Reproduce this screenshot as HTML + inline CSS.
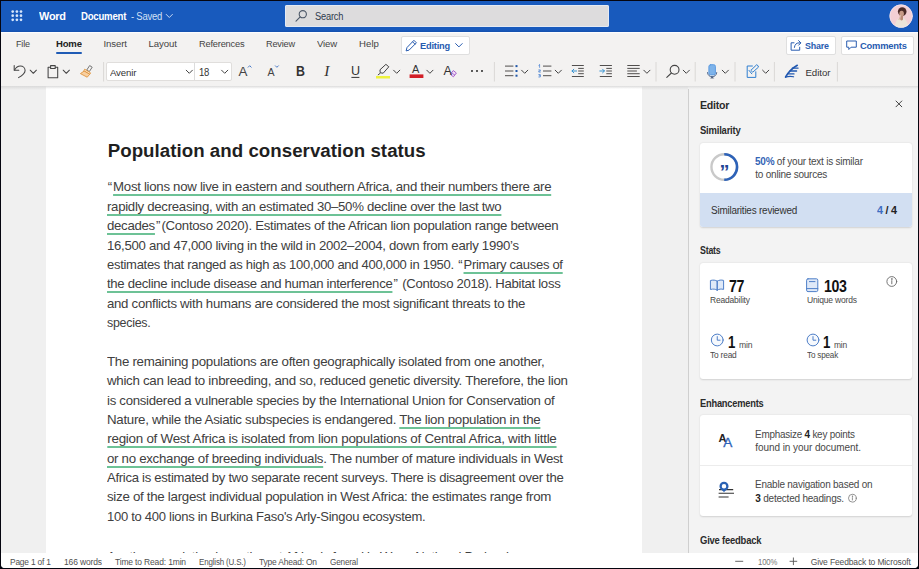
<!DOCTYPE html>
<html lang="en"><head><meta charset="utf-8"><title>Word - Document</title>
<style>
html,body{margin:0;padding:0;background:#fff;}
body{width:919px;height:569px;overflow:hidden;position:relative;font-family:"Liberation Sans", sans-serif;}
.t{position:absolute;white-space:nowrap;margin:0;padding:0;z-index:2;}
.a{position:absolute;}
svg{position:absolute;overflow:visible;z-index:2;}
.u{text-decoration:underline;text-decoration-color:#6dc296;text-decoration-thickness:1.8px;text-underline-offset:2.5px;text-decoration-skip-ink:none;}
b{font-weight:700;}
.q{margin:0 1.2px;}
</style></head>
<body>
<div class="a" style="left:0;top:0;width:919px;height:569px;background:#05050f;"></div>
<div class="a" id="app" style="left:1px;top:1px;width:916.8px;height:566.5px;background:#f0f0f0;border-radius:0 0 4px 4px;overflow:hidden;">
  <div class="a" style="left:0;top:0;width:917px;height:31.1px;background:linear-gradient(#185abd 0,#185abd 29.3px,#1552b0 29.8px,#1552b0 100%);"></div>
  <div class="a" style="left:0;top:31.1px;width:917px;height:53.5px;background:#f3f2f1;box-shadow:inset 0 1.2px 0 #fbfcfe;"></div>
  <div class="a" style="left:0;top:84.6px;width:917px;height:4px;background:linear-gradient(#dadada,#f0f0f0);"></div>
  <div class="a" style="left:45px;top:84.6px;width:595.7px;height:470px;background:#fff;"></div>
  <div class="a" style="left:45px;top:84.6px;width:595.7px;height:3.5px;background:linear-gradient(#dcdcdc,#fff);"></div>
  <div class="a" style="left:687.4px;top:84.6px;width:231px;height:470px;background:#f3f3f3;border-left:1px solid #cfcfcf;"></div>
  <div class="a" style="left:687.4px;top:84.6px;width:231px;height:3.5px;background:linear-gradient(#dcdcdc,#f3f3f3);"></div>
  <div class="a" style="left:0;top:551.6px;width:917px;height:16px;background:#fff;z-index:1;"></div>
</div>
<!-- search -->
<div class="a" style="left:285px;top:5.2px;width:324px;height:21.8px;background:#dddcdd;border-radius:2px;box-shadow:inset 0 0 0 0.8px #e6eefb;"></div>
<!-- buttons -->
<div class="a" style="left:400.6px;top:35.6px;width:67px;height:17.8px;background:#fff;border:1px solid #dfdfdf;border-radius:2px;box-sizing:content-box;"></div>
<div class="a" style="left:785.6px;top:35.6px;width:48.4px;height:17.8px;background:#fff;border:1px solid #dfdfdf;border-radius:2px;"></div>
<div class="a" style="left:841px;top:35.6px;width:71px;height:17.8px;background:#fff;border:1px solid #dfdfdf;border-radius:2px;"></div>
<!-- home underline -->
<div class="a" style="left:56px;top:52.3px;width:26.4px;height:1.8px;background:#1f5bb5;border-radius:1px;"></div>
<!-- font box -->
<div class="a" style="left:106px;top:62.4px;width:123.6px;height:17px;background:#fff;border:1px solid #e0dedc;border-radius:2px;"></div>
<div class="a" style="left:194.4px;top:63px;width:1px;height:17px;background:#dcdcdc;"></div>
<!-- cards -->
<div class="a" style="left:699.5px;top:142.5px;width:212px;height:84.5px;background:#fff;border-radius:3px;box-shadow:0 0.5px 1.8px rgba(0,0,0,.14);overflow:hidden;">
  <div class="a" style="left:0;top:50.5px;width:212px;height:34px;background:#d2dff2;"></div>
</div>
<div class="a" style="left:699.5px;top:262.5px;width:212px;height:116.2px;background:#fff;border-radius:3px;box-shadow:0 0.5px 1.8px rgba(0,0,0,.14);"></div>
<div class="a" style="left:699.5px;top:415px;width:212px;height:100.7px;background:#fff;border-radius:3px;box-shadow:0 0.5px 1.8px rgba(0,0,0,.14);">
  <div class="a" style="left:0;top:50px;width:212px;height:1px;background:#ececec;"></div>
</div>
<svg width="919" height="569" viewBox="0 0 919 569" style="left:0;top:0;" fill="none" stroke-linecap="round" stroke-linejoin="round">
<!-- waffle -->
<g fill="#d7e6fb" stroke="none">
<circle cx="12.7" cy="11.6" r="1.35"/><circle cx="16.9" cy="11.6" r="1.35"/><circle cx="21" cy="11.6" r="1.35"/>
<circle cx="12.7" cy="15.7" r="1.35"/><circle cx="16.9" cy="15.7" r="1.35"/><circle cx="21" cy="15.7" r="1.35"/>
<circle cx="12.7" cy="19.8" r="1.35"/><circle cx="16.9" cy="19.8" r="1.35"/><circle cx="21" cy="19.8" r="1.35"/>
</g>
<path d="M166.2 14.4l3.1 3.1 3.1-3.1" stroke="#c9d9f2" stroke-width="1"/>
<!-- header search icon -->
<g stroke="#4d5868" stroke-width="1.1"><circle cx="302.8" cy="14.2" r="3.6"/><path d="M300.2 16.9l-4.2 4.2"/></g>
<!-- avatar -->
<g stroke="none">
<circle cx="901.1" cy="16.1" r="11.5" fill="#f3cfd4"/>
<clipPath id="av"><circle cx="901.1" cy="16.1" r="11.4"/></clipPath>
<g clip-path="url(#av)">
<path d="M894.8 28c0.200-5.600 2.400-10.400 6.400-10.400s6.800 4.800 7.400 10.400z" fill="#ece4d8"/>
<ellipse cx="902.2" cy="11.600" rx="4.300" ry="4.400" fill="#4a2a26"/>
<ellipse cx="901.6" cy="13.800" rx="2.300" ry="3.100" fill="#c79a86"/>
<path d="M900.200 15.800h2.800v3.800c-1 1.200-2 1.200-2.800 0z" fill="#b98a76"/>
<path d="M899 19.500c0.800-1.600 1.400-3 1.600-4" stroke="#d9b7a6" stroke-width="1.200" fill="none"/>
</g>
<circle cx="901.1" cy="16.1" r="11.300" fill="none" stroke="#eee6f4" stroke-width="0.700"/>
</g>
<!-- editing pencil -->
<g stroke="#285cb0" stroke-width="1">
<path d="M414.2 40.6l2.2 2.2-7.3 7.3-3 0.8 0.8-3z"/><path d="M412.8 42l2.2 2.2"/>
<path d="M455.6 43.6l3.3 3.3 3.3-3.3"/>
</g>
<!-- share icon -->
<g stroke="#285cb0" stroke-width="1">
<path d="M794 42.8h-2.9v7.4h8.6v-3"/><path d="M794.4 47.4c0.3-2.9 2-4.5 4.6-4.5h1.6"/><path d="M798.6 40.6l2.3 2.3-2.3 2.3"/>
</g>
<!-- comment icon -->
<path d="M847.1 41h9.2v6.2h-5.2l-2.3 2.3v-2.3h-1.7z" stroke="#285cb0" stroke-width="1"/>
<!-- toolbar: undo -->
<g stroke="#444" stroke-width="1.05">
<path d="M14.2 65.6v4.6h4.6"/><path d="M14.6 70c1.4-2.6 3.4-4 5.7-4 2.8 0 4.8 2 4.8 4.6 0 2.6-2 4.600-6.600 7"/>
<path d="M30.200 70.200l3.100 3.100 3.100-3.100"/>
<!-- clipboard -->
<path d="M50.400 67.200h-2.300v10.600h9.600v-10.600h-2.300"/><path d="M50.600 65.600h4.600v2.800h-4.600z"/>
<path d="M63.200 70.200l3.100 3.100 3.100-3.100"/>
</g>
<!-- format painter -->
<g stroke-width="0.9">
<path d="M90 65.800l2.200 1.400-2.900 4.400-2.200-1.400z" stroke="#666" fill="#f3f2f1"/>
<path d="M85 69.400l5.600 3.500-0.900 1.500-5.600-3.500z" stroke="#e0953f" fill="#fbe3c4"/>
<path d="M83.800 71.300l-3.400 2.300 6.800 3.600 2.300-2.700z" stroke="#e0953f" fill="#f8cf9f"/>
</g>
<!-- separators -->
<g stroke="#dad8d6" stroke-width="1" stroke-linecap="butt">
<path d="M103.600 62v19.500M494.400 62v19.500M656 62v19.500M695.200 62v19.500M735 62v19.500M774.400 62v19.500M837.400 62v19.500"/>
</g>
<!-- font box chevrons -->
<g stroke="#444" stroke-width="1">
<path d="M186.200 70.200l3.100 3.100 3.100-3.100"/><path d="M221.600 70.200l3.100 3.100 3.100-3.100"/>
<path d="M393.600 70.200l3.100 3.100 3.100-3.100"/><path d="M426.800 70.200l3.100 3.100 3.100-3.100"/>
<path d="M521.600 70.200l3.100 3.100 3.100-3.100"/><path d="M555.200 70.200l3.100 3.100 3.100-3.100"/>
<path d="M643.800 70.200l3.100 3.100 3.100-3.100"/><path d="M683.200 70.200l3.100 3.100 3.100-3.100"/>
<path d="M722.200 70.200l3.100 3.100 3.100-3.100"/><path d="M762.600 70.200l3.100 3.100 3.100-3.100"/>
</g>
<!-- grow/shrink carets -->
<path d="M248.200 67.200l1.500-1.500 1.500 1.500" stroke="#3a6fc4" stroke-width="0.9"/>
<path d="M275.400 65.800l1.500 1.500 1.500-1.500" stroke="#3a6fc4" stroke-width="0.9"/>
<!-- U underline -->
<path d="M351.400 77.400h8" stroke="#333" stroke-width="1" stroke-linecap="butt"/>
<!-- highlighter -->
<g stroke="#444" stroke-width="1">
<path d="M386.200 64.600l2.600 2.200-5.600 6.400-3-0.400-0.200-2.600z"/><path d="M380 73.400l-1.800 1.400"/>
</g>
<rect x="376" y="76" width="14" height="2.500" fill="#eef23c" stroke="none"/>
<rect x="409.600" y="74.400" width="13.800" height="3.600" fill="#d21f27" stroke="none"/>
<!-- eraser on clear format -->
<path d="M453.600 70.800l2.800 2.200-3 3.800-2.800-2.200z" stroke="#a055c8" stroke-width="0.9" fill="#f0e0f6"/><path d="M451.900 72.900l2.800 2.200" stroke="#a055c8" stroke-width="0.8"/>
<!-- dots -->
<g fill="#333" stroke="none"><circle cx="472" cy="71" r="1.050"/><circle cx="477" cy="71" r="1.050"/><circle cx="482" cy="71" r="1.050"/></g>
<!-- bullets -->
<g stroke="#484644" stroke-width="0.95" stroke-linecap="butt"><path d="M505 66.100h8.400M505 71h8.400M505 75.700h8.400"/></g>
<g fill="#1f56a8" stroke="none"><rect x="515.500" y="65.100" width="2" height="2"/><rect x="515.500" y="70" width="2" height="2"/><rect x="515.500" y="74.700" width="2" height="2"/></g>
<!-- numbering -->
<g stroke="#484644" stroke-width="0.95" stroke-linecap="butt"><path d="M543 66.100h8.400M543 71h8.400M543 75.700h8.400"/></g>
<g stroke="#3a78d0" stroke-width="0.700"><path d="M539.600 64.800v2.600M538.800 65.400l0.800-0.600M538.800 69.900h1.500v1.100h-1.500v1.100h1.600M538.800 74.500h1.500v2.500h-1.500M539.200 75.700h1"/></g>
<!-- outdent -->
<g stroke="#484644" stroke-width="0.95" stroke-linecap="butt"><path d="M571.900 65.500h11.900M578.200 68.400h5.600M578.200 71h5.600M578.200 73.700h5.600M571.900 76.500h11.900"/></g>
<g stroke="#2f8fd0" stroke-width="0.95"><path d="M576.600 71h-4.600M573.800 69.200l-1.800 1.800 1.800 1.800"/></g>
<!-- indent -->
<g stroke="#484644" stroke-width="0.95" stroke-linecap="butt"><path d="M599.800 65.500h12.100M606.300 68.400h5.600M606.300 71h5.600M606.300 73.700h5.600M599.800 76.500h12.100"/></g>
<g stroke="#2f8fd0" stroke-width="0.95"><path d="M599.800 71h4.600M602.600 69.200l1.800 1.800-1.800 1.800"/></g>
<!-- align -->
<g stroke="#484644" stroke-width="0.95" stroke-linecap="butt"><path d="M627.300 65.500h12.400M627.300 68.400h12.400M627.300 71h9.600M627.300 73.700h12.400M627.300 76.500h12.400"/></g>
<!-- find -->
<g stroke="#444" stroke-width="1.1"><circle cx="674.600" cy="69.800" r="4.400"/><path d="M671.400 73l-4.600 4.400"/></g>
<!-- mic -->
<g stroke-width="1"><path d="M707.500 72.600c0.400 2.900 2.200 4.100 4.600 4.100s4.200-1.200 4.600-4.100" stroke="#4a6288"/><path d="M710.900 78l1.200-1.300 1.200 1.300z" fill="#3a4f70" stroke="#3a4f70" stroke-width="0.500"/><rect x="708.900" y="64.700" width="6.500" height="10.200" rx="1.700" fill="#7db3ea" stroke="#5d9be0"/></g>
<!-- designer -->
<g stroke="#2f7fd0" stroke-width="1"><path d="M752.400 66h-5.200v11.400h8.600v-5.600"/><path d="M757.600 65.400l1 1.600-5.800 5.200-2-1.800 5.600-5.400z"/><path d="M749 70.400l2.800 3.400"/></g>
<!-- editor icon -->
<g stroke="#2158b0" stroke-linecap="round"><path d="M797.300 65.300c-4.600 2.600-8.800 6.600-11.700 11.700" stroke-width="1.600"/><path d="M792.300 68.100h5.800M790.200 71h6.400M788.200 73.900h5.800" stroke-width="1.300"/><path d="M785.400 77.300c2.400-0.900 5.200-1.100 8.200-0.500" stroke-width="1.150"/></g>
<!-- panel close -->
<path d="M896 101l5.800 5.800M901.800 101l-5.800 5.800" stroke="#444" stroke-width="1"/>
<!-- progress ring -->
<circle cx="724.250" cy="167" r="12.800" stroke="#c9c9c9" stroke-width="2.400"/>
<path d="M724.250 154.200a12.800 12.800 0 0 1 0 25.600" stroke="#2d62b8" stroke-width="2.600" stroke-linecap="butt"/>
<!-- book icon -->
<g stroke="#4f7fc8" stroke-width="1"><path d="M717.200 281.200v9M710.800 280.400c2.400-0.600 4.600-0.400 6.400 0.800 1.800-1.200 4-1.400 6.400-0.800v9c-2.400-0.600-4.600-0.400-6.400 0.800-1.800-1.200-4-1.400-6.400-0.800z" fill="#dfe9f8"/><path d="M717.200 281.200v9"/></g>
<g stroke="#4f7fc8" stroke-width="1"><rect x="806.600" y="278.800" width="11.200" height="12.800" rx="1.400" fill="#dfe9f8"/><path d="M809.400 281.600h5.600M806.800 288.600h11"/></g>
<!-- info icons -->
<g stroke="#666" stroke-width="0.9"><circle cx="891.800" cy="281.500" r="4.900"/><path d="M891.800 280.600v3.200"/><circle cx="891.800" cy="279" r="0.300"/></g>
<g stroke="#777" stroke-width="0.800"><circle cx="852.400" cy="498.200" r="3.900"/><path d="M852.400 497.600v2.400"/><circle cx="852.400" cy="496.200" r="0.200"/></g>
<!-- clocks -->
<g stroke="#4f7fc8" stroke-width="1"><circle cx="717.250" cy="340" r="5.900" fill="#f6f9fd"/><path d="M717.250 336.600v3.600h2.800"/></g>
<g stroke="#4f7fc8" stroke-width="1"><circle cx="813" cy="340" r="5.900" fill="#f6f9fd"/><path d="M813 336.600v3.600h2.800"/></g>
<!-- nav icon -->
<g stroke="#333" stroke-width="1.100" stroke-linecap="butt"><path d="M719 489.600h14.200M718.600 493.300h15.400M718.600 497h10"/></g>
<path d="M721 488.800l3 3.400 3-3.400z" fill="#2b62b4" stroke="none"/>
<circle cx="724" cy="486.300" r="3.400" fill="#fff" stroke="#2b62b4" stroke-width="2.300"/>
<!-- status bar zoom -->
<g stroke="#555" stroke-width="0.9" stroke-linecap="butt"><path d="M735.200 561.300h8M789.600 561.300h7.600M793.400 557.500v7.600"/></g>
</svg>

<div class="t" id="t0" style="left:39.40px;top:11px;font-size:11.40px;line-height:11px;font-weight:700;color:#ffffff;letter-spacing:-0.251px;transform:scaleX(0.9594);transform-origin:0 0;">Word</div>
<div class="t" id="t1" style="left:80.60px;top:12px;font-size:10.00px;line-height:10px;font-weight:700;color:#ffffff;letter-spacing:-0.220px;transform:scaleX(0.9586);transform-origin:0 0;">Document</div>
<div class="t" id="t2" style="left:131.00px;top:12px;font-size:10.00px;line-height:10px;font-weight:400;color:#d3e0f5;letter-spacing:-0.220px;transform:scaleX(0.9470);transform-origin:0 0;">- Saved</div>
<div class="t" id="t3" style="left:315.00px;top:12px;font-size:10.00px;line-height:10px;font-weight:400;color:#2f3b4d;letter-spacing:-0.220px;transform:scaleX(0.9283);transform-origin:0 0;">Search</div>
<div class="t" id="t4" style="left:16.00px;top:39px;font-size:9.60px;line-height:10px;font-weight:400;color:#444;letter-spacing:-0.211px;transform:scaleX(0.9436);transform-origin:0 0;">File</div>
<div class="t" id="t5" style="left:56.00px;top:39px;font-size:9.60px;line-height:10px;font-weight:700;color:#222;letter-spacing:-0.188px;transform:scaleX(0.9964);transform-origin:0 0;">Home</div>
<div class="t" id="t6" style="left:103.40px;top:39px;font-size:9.60px;line-height:10px;font-weight:400;color:#444;letter-spacing:-0.073px;">Insert</div>
<div class="t" id="t7" style="left:148.40px;top:39px;font-size:9.60px;line-height:10px;font-weight:400;color:#444;letter-spacing:-0.039px;">Layout</div>
<div class="t" id="t8" style="left:199.00px;top:39px;font-size:9.60px;line-height:10px;font-weight:400;color:#444;letter-spacing:-0.211px;transform:scaleX(0.9668);transform-origin:0 0;">References</div>
<div class="t" id="t9" style="left:266.40px;top:39px;font-size:9.60px;line-height:10px;font-weight:400;color:#444;letter-spacing:-0.211px;transform:scaleX(0.9601);transform-origin:0 0;">Review</div>
<div class="t" id="t10" style="left:317.40px;top:39px;font-size:9.60px;line-height:10px;font-weight:400;color:#444;letter-spacing:-0.121px;transform:scaleX(0.9969);transform-origin:0 0;">View</div>
<div class="t" id="t11" style="left:359.00px;top:39px;font-size:9.60px;line-height:10px;font-weight:400;color:#444;letter-spacing:0.076px;">Help</div>
<div class="t" id="t12" style="left:420.40px;top:41px;font-size:9.80px;line-height:10px;font-weight:700;color:#285cb0;letter-spacing:-0.216px;transform:scaleX(0.9466);transform-origin:0 0;">Editing</div>
<div class="t" id="t13" style="left:805.00px;top:41px;font-size:9.80px;line-height:10px;font-weight:700;color:#285cb0;letter-spacing:-0.216px;transform:scaleX(0.9101);transform-origin:0 0;">Share</div>
<div class="t" id="t14" style="left:860.40px;top:41px;font-size:9.80px;line-height:10px;font-weight:700;color:#285cb0;letter-spacing:-0.216px;transform:scaleX(0.9568);transform-origin:0 0;">Comments</div>
<div class="t" id="t15" style="left:110.00px;top:68px;font-size:9.70px;line-height:10px;font-weight:400;color:#333;letter-spacing:-0.163px;transform:scaleX(0.9971);transform-origin:0 0;">Avenir</div>
<div class="t" id="t16" style="left:198.60px;top:68px;font-size:10.20px;line-height:10px;font-weight:400;color:#333;letter-spacing:-0.224px;transform:scaleX(0.9357);transform-origin:0 0;">18</div>
<div class="t" id="t17" style="left:805.40px;top:68px;font-size:9.70px;line-height:10px;font-weight:400;color:#333;letter-spacing:-0.020px;">Editor</div>
<div class="t" id="t18" style="left:238.40px;top:65px;font-size:13.40px;line-height:13px;font-weight:400;color:#444;">A</div>
<div class="t" id="t19" style="left:267.60px;top:67px;font-size:10.60px;line-height:11px;font-weight:400;color:#444;">A</div>
<div class="t" id="t20" style="left:295.70px;top:64px;font-size:14.40px;line-height:14px;font-weight:700;color:#333;transform:scaleX(0.86);transform-origin:0 0;">B</div>
<div class="t" id="t21" style="left:324.20px;top:63px;font-size:15.40px;line-height:15px;font-weight:400;color:#333;font-family:'Liberation Serif',serif;font-style:italic;">I</div>
<div class="t" id="t22" style="left:351.00px;top:65px;font-size:12.60px;line-height:13px;font-weight:400;color:#333;">U</div>
<div class="t" id="t23" style="left:411.90px;top:64px;font-size:11.00px;line-height:11px;font-weight:400;color:#333;">A</div>
<div class="t" id="t24" style="left:443.40px;top:65px;font-size:12.60px;line-height:13px;font-weight:400;color:#333;">A</div>
<div class="t" id="t25" style="left:107.70px;top:141px;font-size:18.70px;line-height:19px;font-weight:700;color:#1f1f1f;letter-spacing:0.039px;">Population and conservation status</div>
<div class="t" id="t26" style="left:107.30px;top:180px;font-size:13.40px;line-height:13px;font-weight:400;color:#404040;letter-spacing:-0.295px;transform:scaleX(0.9881);transform-origin:0 0;"><span class="q" style="margin-left:0.8px">“</span><span class="u">Most lions now live in eastern and southern Africa, and their numbers there are</span></div>
<div class="t" id="t27" style="left:107.30px;top:200px;font-size:13.40px;line-height:13px;font-weight:400;color:#404040;letter-spacing:-0.295px;transform:scaleX(0.9862);transform-origin:0 0;"><span class="u">rapidly decreasing, with an estimated 30–50% decline over the last two</span></div>
<div class="t" id="t28" style="left:107.30px;top:219px;font-size:13.40px;line-height:13px;font-weight:400;color:#404040;letter-spacing:-0.295px;transform:scaleX(0.9872);transform-origin:0 0;"><span class="u">decades</span><span class="q">”</span>(Contoso 2020). Estimates of the African lion population range between</div>
<div class="t" id="t29" style="left:107.30px;top:239px;font-size:13.40px;line-height:13px;font-weight:400;color:#404040;letter-spacing:-0.295px;transform:scaleX(0.9845);transform-origin:0 0;">16,500 and 47,000 living in the wild in 2002–2004, down from early 1990’s</div>
<div class="t" id="t30" style="left:107.30px;top:258px;font-size:13.40px;line-height:13px;font-weight:400;color:#404040;letter-spacing:-0.295px;transform:scaleX(0.9709);transform-origin:0 0;">estimates that ranged as high as 100,000 and 400,000 in 1950. <span class="q">“</span><span class="u">Primary causes of</span></div>
<div class="t" id="t31" style="left:107.30px;top:277px;font-size:13.40px;line-height:13px;font-weight:400;color:#404040;letter-spacing:-0.295px;transform:scaleX(0.9801);transform-origin:0 0;"><span class="u">the decline include disease and human interference</span><span class="q">”</span> (Contoso 2018). Habitat loss</div>
<div class="t" id="t32" style="left:107.30px;top:297px;font-size:13.40px;line-height:13px;font-weight:400;color:#404040;letter-spacing:-0.295px;transform:scaleX(0.9874);transform-origin:0 0;">and conflicts with humans are considered the most significant threats to the</div>
<div class="t" id="t33" style="left:107.30px;top:316px;font-size:13.40px;line-height:13px;font-weight:400;color:#404040;letter-spacing:-0.295px;transform:scaleX(0.9286);transform-origin:0 0;">species.</div>
<div class="t" id="t34" style="left:107.30px;top:355px;font-size:13.40px;line-height:13px;font-weight:400;color:#404040;letter-spacing:-0.295px;transform:scaleX(0.9934);transform-origin:0 0;">The remaining populations are often geographically isolated from one another,</div>
<div class="t" id="t35" style="left:107.30px;top:374px;font-size:13.40px;line-height:13px;font-weight:400;color:#404040;letter-spacing:-0.295px;transform:scaleX(0.9949);transform-origin:0 0;">which can lead to inbreeding, and so, reduced genetic diversity. Therefore, the lion</div>
<div class="t" id="t36" style="left:107.30px;top:394px;font-size:13.40px;line-height:13px;font-weight:400;color:#404040;letter-spacing:-0.295px;transform:scaleX(0.9855);transform-origin:0 0;">is considered a vulnerable species by the International Union for Conservation of</div>
<div class="t" id="t37" style="left:107.30px;top:413px;font-size:13.40px;line-height:13px;font-weight:400;color:#404040;letter-spacing:-0.295px;transform:scaleX(0.9939);transform-origin:0 0;">Nature, while the Asiatic subspecies is endangered. <span class="u">The lion population in the</span></div>
<div class="t" id="t38" style="left:107.30px;top:432px;font-size:13.40px;line-height:13px;font-weight:400;color:#404040;letter-spacing:-0.260px;"><span class="u">region of West Africa is isolated from lion populations of Central Africa, with little</span></div>
<div class="t" id="t39" style="left:107.30px;top:452px;font-size:13.40px;line-height:13px;font-weight:400;color:#404040;letter-spacing:-0.295px;transform:scaleX(0.9912);transform-origin:0 0;"><span class="u">or no exchange of breeding individuals</span>. The number of mature individuals in West</div>
<div class="t" id="t40" style="left:107.30px;top:471px;font-size:13.40px;line-height:13px;font-weight:400;color:#404040;letter-spacing:-0.295px;transform:scaleX(0.9778);transform-origin:0 0;">Africa is estimated by two separate recent surveys. There is disagreement over the</div>
<div class="t" id="t41" style="left:107.30px;top:490px;font-size:13.40px;line-height:13px;font-weight:400;color:#404040;letter-spacing:-0.295px;transform:scaleX(0.9942);transform-origin:0 0;">size of the largest individual population in West Africa: the estimates range from</div>
<div class="t" id="t42" style="left:107.30px;top:510px;font-size:13.40px;line-height:13px;font-weight:400;color:#404040;letter-spacing:-0.295px;transform:scaleX(0.9726);transform-origin:0 0;">100 to 400 lions in Burkina Faso's Arly-Singou ecosystem.</div>
<div class="t" id="t43" style="left:107.30px;top:550px;font-size:13.40px;line-height:13px;font-weight:400;color:#404040;letter-spacing:-0.295px;transform:scaleX(0.9787);transform-origin:0 0;z-index:0;">Another population in northwest Africa is found in Waza National Park, where</div>
<div class="t" id="t44" style="left:700.25px;top:99px;font-size:11.50px;line-height:12px;font-weight:700;color:#2b2b2b;letter-spacing:-0.253px;transform:scaleX(0.9231);transform-origin:0 0;">Editor</div>
<div class="t" id="t45" style="left:699.50px;top:125px;font-size:10.50px;line-height:10px;font-weight:700;color:#2b2b2b;letter-spacing:-0.231px;transform:scaleX(0.9016);transform-origin:0 0;">Similarity</div>
<div class="t" id="t46" style="left:755.25px;top:157px;font-size:10.00px;line-height:10px;font-weight:400;color:#484848;letter-spacing:-0.220px;transform:scaleX(0.9980);transform-origin:0 0;"><b style="color:#3465b6">50%</b> of your text is similar</div>
<div class="t" id="t47" style="left:755.25px;top:170px;font-size:10.00px;line-height:10px;font-weight:400;color:#484848;letter-spacing:-0.219px;">to online sources</div>
<div class="t" id="t48" style="left:710.75px;top:206px;font-size:10.00px;line-height:10px;font-weight:400;color:#333;letter-spacing:-0.220px;transform:scaleX(0.9942);transform-origin:0 0;">Similarities reviewed</div>
<div class="t" id="t49" style="left:876.50px;top:205px;font-size:11.00px;line-height:11px;font-weight:700;color:#222;letter-spacing:-0.242px;transform:scaleX(0.9775);transform-origin:0 0;"><span style="color:#3d6cc0">4</span> / 4</div>
<div class="t" id="t50" style="left:699.50px;top:245px;font-size:10.50px;line-height:10px;font-weight:700;color:#2b2b2b;letter-spacing:-0.231px;transform:scaleX(0.8380);transform-origin:0 0;">Stats</div>
<div class="t" id="t51" style="left:729.00px;top:278px;font-size:16.50px;line-height:16px;font-weight:700;color:#111;letter-spacing:-0.363px;transform:scaleX(0.8609);transform-origin:0 0;">77</div>
<div class="t" id="t52" style="left:709.75px;top:296px;font-size:9.00px;line-height:9px;font-weight:400;color:#484848;letter-spacing:-0.198px;transform:scaleX(0.9399);transform-origin:0 0;">Readability</div>
<div class="t" id="t53" style="left:824.00px;top:278px;font-size:16.50px;line-height:16px;font-weight:700;color:#111;letter-spacing:-0.363px;transform:scaleX(0.8577);transform-origin:0 0;">103</div>
<div class="t" id="t54" style="left:806.50px;top:296px;font-size:9.00px;line-height:9px;font-weight:400;color:#484848;letter-spacing:-0.198px;transform:scaleX(0.9460);transform-origin:0 0;">Unique words</div>
<div class="t" id="t55" style="left:728.00px;top:334px;font-size:16.50px;line-height:16px;font-weight:700;color:#111;transform:scaleX(0.8);transform-origin:0 0;">1</div>
<div class="t" id="t56" style="left:738.50px;top:341px;font-size:9.00px;line-height:9px;font-weight:400;color:#484848;letter-spacing:-0.198px;transform:scaleX(0.9561);transform-origin:0 0;">min</div>
<div class="t" id="t57" style="left:709.75px;top:351px;font-size:9.00px;line-height:9px;font-weight:400;color:#484848;letter-spacing:-0.198px;transform:scaleX(0.9276);transform-origin:0 0;">To read</div>
<div class="t" id="t58" style="left:823.40px;top:334px;font-size:16.50px;line-height:16px;font-weight:700;color:#111;transform:scaleX(0.8);transform-origin:0 0;">1</div>
<div class="t" id="t59" style="left:834.00px;top:341px;font-size:9.00px;line-height:9px;font-weight:400;color:#484848;letter-spacing:-0.198px;transform:scaleX(0.9384);transform-origin:0 0;">min</div>
<div class="t" id="t60" style="left:806.50px;top:351px;font-size:9.00px;line-height:9px;font-weight:400;color:#484848;letter-spacing:-0.198px;transform:scaleX(0.9018);transform-origin:0 0;">To speak</div>
<div class="t" id="t61" style="left:699.50px;top:398px;font-size:10.50px;line-height:10px;font-weight:700;color:#2b2b2b;letter-spacing:-0.231px;transform:scaleX(0.8835);transform-origin:0 0;">Enhancements</div>
<div class="t" id="t62" style="left:755.25px;top:430px;font-size:10.00px;line-height:10px;font-weight:400;color:#484848;letter-spacing:-0.220px;transform:scaleX(0.9901);transform-origin:0 0;">Emphasize <b style="color:#222">4</b> key points</div>
<div class="t" id="t63" style="left:755.25px;top:443px;font-size:10.00px;line-height:10px;font-weight:400;color:#484848;letter-spacing:-0.069px;">found in your document.</div>
<div class="t" id="t64" style="left:755.25px;top:480px;font-size:10.00px;line-height:10px;font-weight:400;color:#484848;letter-spacing:-0.220px;transform:scaleX(0.9963);transform-origin:0 0;">Enable navigation based on</div>
<div class="t" id="t65" style="left:755.25px;top:494px;font-size:10.00px;line-height:10px;font-weight:400;color:#484848;letter-spacing:-0.211px;"><b style="color:#222">3</b> detected headings.</div>
<div class="t" id="t66" style="left:699.50px;top:535px;font-size:10.50px;line-height:10px;font-weight:700;color:#2b2b2b;letter-spacing:-0.231px;transform:scaleX(0.8987);transform-origin:0 0;">Give feedback</div>
<div class="t" id="t67" style="left:10.00px;top:558px;font-size:8.50px;line-height:8px;font-weight:400;color:#505050;letter-spacing:-0.187px;transform:scaleX(0.9850);transform-origin:0 0;">Page 1 of 1</div>
<div class="t" id="t68" style="left:64.00px;top:558px;font-size:8.50px;line-height:8px;font-weight:400;color:#505050;letter-spacing:-0.143px;transform:scaleX(0.9979);transform-origin:0 0;">166 words</div>
<div class="t" id="t69" style="left:115.00px;top:558px;font-size:8.50px;line-height:8px;font-weight:400;color:#505050;letter-spacing:-0.163px;">Time to Read: 1min</div>
<div class="t" id="t70" style="left:199.00px;top:558px;font-size:8.50px;line-height:8px;font-weight:400;color:#505050;letter-spacing:-0.187px;transform:scaleX(0.9397);transform-origin:0 0;">English (U.S.)</div>
<div class="t" id="t71" style="left:259.00px;top:558px;font-size:8.50px;line-height:8px;font-weight:400;color:#505050;letter-spacing:-0.187px;transform:scaleX(0.9909);transform-origin:0 0;">Type Ahead: On</div>
<div class="t" id="t72" style="left:330.00px;top:558px;font-size:8.50px;line-height:8px;font-weight:400;color:#505050;letter-spacing:-0.187px;transform:scaleX(0.9614);transform-origin:0 0;">General</div>
<div class="t" id="t73" style="left:757.75px;top:558px;font-size:8.50px;line-height:8px;font-weight:400;color:#777;letter-spacing:-0.187px;transform:scaleX(0.9086);transform-origin:0 0;">100%</div>
<div class="t" id="t74" style="left:810.75px;top:558px;font-size:8.50px;line-height:8px;font-weight:400;color:#505050;letter-spacing:-0.136px;">Give Feedback to Microsoft</div>
<div class="t" id="t75" style="left:719.40px;top:162px;font-size:20.00px;line-height:20px;font-weight:700;color:#1e4595;">”</div>
<div class="t" id="t76" style="left:718.60px;top:433px;font-size:11.00px;line-height:11px;font-weight:700;color:#222;">A</div>
<div class="t" id="t77" style="left:723.20px;top:436px;font-size:13.60px;line-height:14px;font-weight:400;color:#2d62b8;-webkit-text-stroke:0.3px #2d62b8;">A</div>
</body></html>
